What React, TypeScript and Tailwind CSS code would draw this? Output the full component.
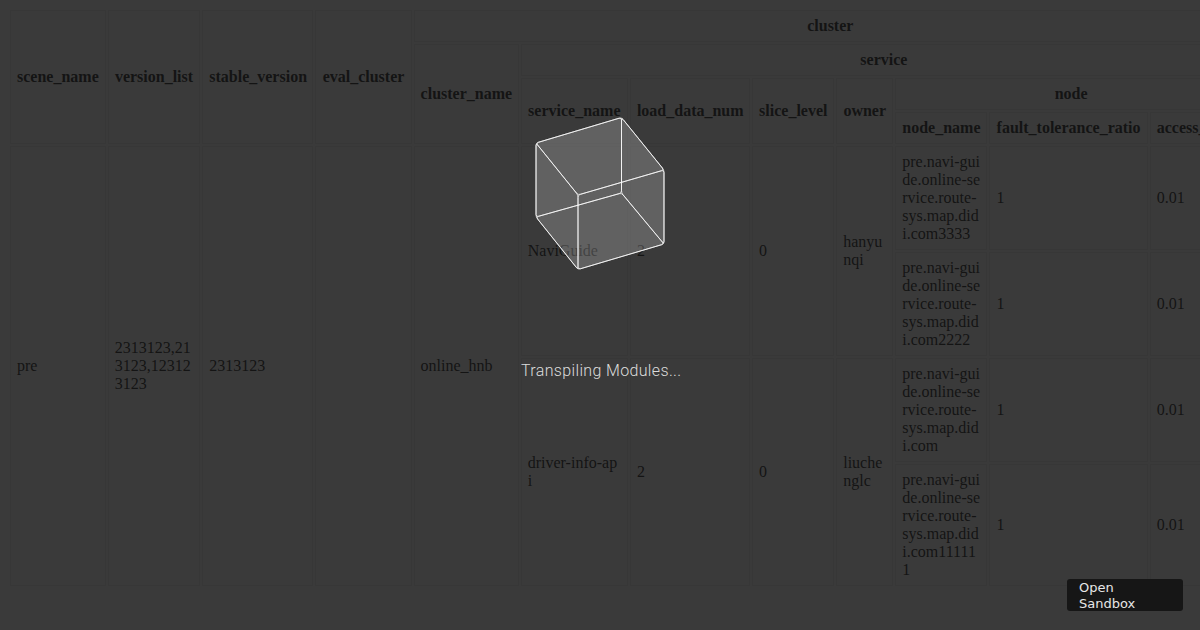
const Th = ({ children, rowSpan, colSpan, start }: { children: string; rowSpan?: number; colSpan?: number; start?: boolean }) => (
  <th
    rowSpan={rowSpan}
    colSpan={colSpan}
    className={`border border-[#e8e8e8] p-[6px] font-bold ${start ? "text-left" : "text-center"}`}
  >
    {children}
  </th>
);
const Td = ({ children, rowSpan }: { children: string; rowSpan?: number }) => (
  <td rowSpan={rowSpan} className="border border-[#e8e8e8] p-[6px] text-left break-all">
    {children}
  </td>
);

const nodeRow = (name: string) => (
  <>
    <Td>{name}</Td>
    <Td>1</Td>
    <Td>0.01</Td>
  </>
);

type P = [number, number];
const A: P = [536, 143];
const B: P = [621.5, 117.5];
const C: P = [664, 170];
const D: P = [578, 195];
const E: P = [536, 217];
const F: P = [621.5, 193];
const G: P = [664, 244];
const H: P = [578, 269.5];

const rounded = (pts: P[], r: number) => {
  const n = pts.length;
  let d = "";
  pts.forEach((p, i) => {
    const a = pts[(i + n - 1) % n];
    const b = pts[(i + 1) % n];
    const la = Math.hypot(a[0] - p[0], a[1] - p[1]);
    const lb = Math.hypot(b[0] - p[0], b[1] - p[1]);
    const s: P = [p[0] + ((a[0] - p[0]) * r) / la, p[1] + ((a[1] - p[1]) * r) / la];
    const e: P = [p[0] + ((b[0] - p[0]) * r) / lb, p[1] + ((b[1] - p[1]) * r) / lb];
    d += `${i === 0 ? "M" : "L"}${s[0]} ${s[1]} Q${p[0]} ${p[1]} ${e[0]} ${e[1]} `;
  });
  return d + "Z";
};

const faces: P[][] = [
  [A, B, C, D],
  [E, F, G, H],
  [A, D, H, E],
  [D, C, G, H],
  [A, B, F, E],
  [B, C, G, F],
];

export default function App() {
  const widths = [95.6, 92.4, 111, 96, 105, 107, 120, 82, 57, 92, 158, 97];
  return (
    <div className="relative h-[630px] w-[1200px] overflow-hidden bg-white p-2 font-['Liberation_Serif',serif] text-base leading-[normal] text-black">
      <table className="table-fixed w-[1241px] max-w-none border-separate border-spacing-[2px]">
        <colgroup>
          {widths.map((w, i) => (
            <col key={i} style={{ width: w }} />
          ))}
        </colgroup>
        <thead>
          <tr>
            <Th rowSpan={4}>scene_name</Th>
            <Th rowSpan={4}>version_list</Th>
            <Th rowSpan={4}>stable_version</Th>
            <Th rowSpan={4}>eval_cluster</Th>
            <Th colSpan={8}>cluster</Th>
          </tr>
          <tr>
            <Th rowSpan={3}>cluster_name</Th>
            <Th colSpan={7}>service</Th>
          </tr>
          <tr>
            <Th rowSpan={2}>service_name</Th>
            <Th rowSpan={2}>load_data_num</Th>
            <Th rowSpan={2}>slice_level</Th>
            <Th rowSpan={2}>owner</Th>
            <Th colSpan={3}>node</Th>
          </tr>
          <tr>
            <Th>node_name</Th>
            <Th>fault_tolerance_ratio</Th>
            <Th start>access_ratio</Th>
          </tr>
        </thead>
        <tbody>
          <tr>
            <Td rowSpan={4}>pre</Td>
            <Td rowSpan={4}>2313123,213123,123123123</Td>
            <Td rowSpan={4}>2313123</Td>
            <Td rowSpan={4}>{""}</Td>
            <Td rowSpan={4}>online_hnb</Td>
            <Td rowSpan={2}>NaviGuide</Td>
            <Td rowSpan={2}>2</Td>
            <Td rowSpan={2}>0</Td>
            <Td rowSpan={2}>hanyunqi</Td>
            {nodeRow("pre.navi-guide.online-service.route-sys.map.didi.com3333")}
          </tr>
          <tr>{nodeRow("pre.navi-guide.online-service.route-sys.map.didi.com2222")}</tr>
          <tr>
            <Td rowSpan={2}>driver-info-api</Td>
            <Td rowSpan={2}>2</Td>
            <Td rowSpan={2}>0</Td>
            <Td rowSpan={2}>liuchenglc</Td>
            {nodeRow("pre.navi-guide.online-service.route-sys.map.didi.com")}
          </tr>
          <tr>{nodeRow("pre.navi-guide.online-service.route-sys.map.didi.com111111")}</tr>
        </tbody>
      </table>

      <div className="absolute inset-0 bg-[rgba(24,24,24,0.85)]">
        <svg className="absolute left-[530px] top-[112px]" width="140" height="164" viewBox="530 112 140 164" fill="none">
          <path d={rounded([A, B, C, G, H, E], 2.5)} fill="rgba(255,255,255,0.2)" />
          <g stroke="rgba(255,255,255,0.72)" strokeWidth="1">
            {faces.map((f, i) => (
              <path key={i} d={rounded(f, 2.5)} />
            ))}
          </g>
        </svg>
        <div className="absolute left-[521px] top-[361px] font-['Roboto',sans-serif] text-base font-light leading-[19px] tracking-[0.35px] text-[#dcdcdc]">
          Transpiling Modules...
        </div>
        <button className="absolute left-[1067px] top-[579px] h-8 w-[116px] rounded-[3px] bg-[#161616] px-3 pt-px text-left font-['DejaVu_Sans',sans-serif] text-[13px] leading-4 text-[#e6e6e6]">
          Open Sandbox
        </button>
      </div>
    </div>
  );
}
